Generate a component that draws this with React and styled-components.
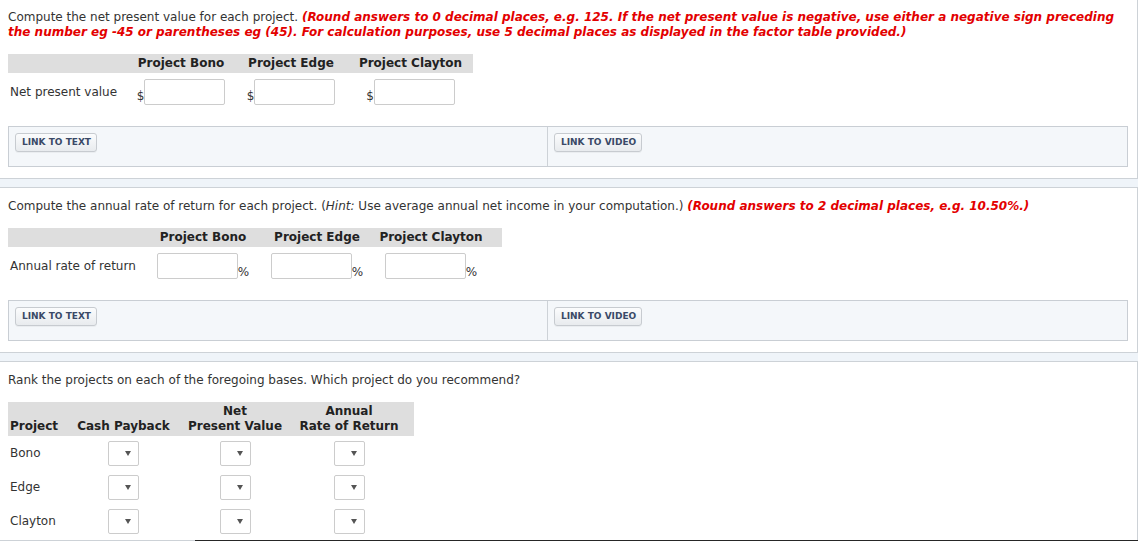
import React from "react";
import styled, { createGlobalStyle } from "styled-components";

const Global = createGlobalStyle`
  html, body { margin: 0; padding: 0; background: #eff4f9; }
  body {
    font-family: "DejaVu Sans", Verdana, sans-serif;
    font-size: 12px;
    color: #333;
  }
`;

const Page = styled.div`
  background: #eff4f9;
  min-height: 541px;
  display: flex;
  flex-direction: column;
  gap: 8px;
  overflow: hidden;
`;

const Section = styled.section`
  background: #fff;
  border: 1px solid #cdd2d7;
  border-left: 0;
  padding: 10px 9px ${(p) => p.$padBottom || "11px"} 8px;
  margin-top: ${(p) => (p.$first ? "-2px" : "0")};
  display: flex;
  flex-direction: column;
`;

const Prompt = styled.p`
  margin: 0 0 15px 0;
  line-height: 15px;
  padding-top: 1px;
  margin-bottom: 14px;
`;

const Warn = styled.span`
  color: #e30000;
  font-weight: bold;
  font-style: italic;
`;

const Em = styled.em`
  font-style: italic;
`;

const Table = styled.div`
  display: flex;
  flex-direction: column;
`;

const HeadRow = styled.div`
  display: grid;
  grid-template-columns: ${(p) => p.$cols};
  width: ${(p) => p.$width};
  background: #dedede;
  padding: 2px 0;
  min-height: 15px;
  align-items: end;
`;

const HeadCell = styled.div`
  font-weight: bold;
  color: #222;
  line-height: 15px;
  text-align: ${(p) => (p.$left ? "left" : "center")};
  padding-left: ${(p) => (p.$left ? "2px" : "0")};
  white-space: nowrap;
`;

const BodyRow = styled.div`
  display: grid;
  grid-template-columns: ${(p) => p.$cols};
  padding: ${(p) => p.$pad || "6px 0 0 0"};
  align-items: center;
`;

const Label = styled.div`
  padding-left: 2px;
  line-height: 15px;
  white-space: nowrap;
`;

const Cell = styled.div`
  display: flex;
  justify-content: center;
  align-items: flex-end;
`;

const Unit = styled.span`
  line-height: 13px;
  padding-bottom: ${(p) => p.$pb || "2px"};
  color: #333;
`;

const Field = styled.input`
  box-sizing: border-box;
  width: 81px;
  height: 26px;
  border: 1px solid #cccccc;
  border-radius: 2px;
  background: #fff;
  margin: 0;
  padding: 0 4px;
  font: inherit;
`;

const SelectBox = styled.div`
  box-sizing: border-box;
  width: 31px;
  height: 25px;
  border: 1px solid #cccccc;
  border-radius: 2px;
  background: #fff;
  display: flex;
  align-items: center;
  justify-content: flex-end;
  padding-right: 7px;
`;

const Caret = styled.span`
  width: 0;
  height: 0;
  border-left: 3px solid transparent;
  border-right: 3px solid transparent;
  border-top: 5px solid #555;
`;

const LinkBar = styled.div`
  margin-top: 21px;
  display: grid;
  grid-template-columns: 538px 1fr;
  border: 1px solid #c9ced4;
  background: #f4f7fa;
  height: 39px;
`;

const LinkCell = styled.div`
  padding: 6px 6px;
  border-left: ${(p) => (p.$divider ? "1px solid #cdd2d7" : "0")};
  display: flex;
  align-items: flex-start;
`;

const LinkButton = styled.button`
  font-family: "DejaVu Sans", Verdana, sans-serif;
  font-size: 9px;
  font-weight: bold;
  color: #3a4967;
  height: 19px;
  padding: 0 5px 0 6px;
  border: 1px solid #c7cbd0;
  border-radius: 3px;
  background: linear-gradient(#fbfcfd, #e8ebee);
  box-shadow: 0 1px 0 rgba(0, 0, 0, 0.04);
  cursor: pointer;
  line-height: 17px;
  white-space: nowrap;
`;

const BottomEdge = styled.div`
  position: fixed;
  left: 195px;
  right: 0;
  bottom: 0;
  height: 1px;
  background: #262626;
`;

const npvCols = "120px 106px 114px 125px";
const arrCols = "142px 106px 122px 106px";
const rankCols = "60px 111px 112px 116px";

const Links = () => (
  <LinkBar>
    <LinkCell>
      <LinkButton type="button">LINK TO TEXT</LinkButton>
    </LinkCell>
    <LinkCell $divider>
      <LinkButton type="button">LINK TO VIDEO</LinkButton>
    </LinkCell>
  </LinkBar>
);

const projects = ["Project Bono", "Project Edge", "Project Clayton"];

export default function App() {
  return (
    <>
      <Global />
      <Page>
        <Section $first>
          <Prompt>
            Compute the net present value for each project.{" "}
            <Warn>
              (Round answers to 0 decimal places, e.g. 125. If the net present value is negative, use
              either a negative sign preceding the number eg -45 or parentheses eg (45). For
              calculation purposes, use 5 decimal places as displayed in the factor table provided.)
            </Warn>
          </Prompt>
          <Table>
            <HeadRow $cols={npvCols} $width="465px">
              <HeadCell />
              {projects.map((p) => (
                <HeadCell key={p}>{p}</HeadCell>
              ))}
            </HeadRow>
            <BodyRow $cols={npvCols}>
              <Label>Net present value</Label>
              {projects.map((p) => (
                <Cell key={p}>
                  <Unit>$</Unit>
                  <Field aria-label={`${p} net present value`} />
                </Cell>
              ))}
            </BodyRow>
          </Table>
          <Links />
        </Section>

        <Section>
          <Prompt>
            Compute the annual rate of return for each project. (<Em>Hint:</Em> Use average annual
            net income in your computation.){" "}
            <Warn>(Round answers to 2 decimal places, e.g. 10.50%.)</Warn>
          </Prompt>
          <Table>
            <HeadRow $cols={arrCols} $width="494px">
              <HeadCell />
              {projects.map((p) => (
                <HeadCell key={p}>{p}</HeadCell>
              ))}
            </HeadRow>
            <BodyRow $cols={arrCols}>
              <Label>Annual rate of return</Label>
              {projects.map((p) => (
                <Cell key={p}>
                  <Field aria-label={`${p} annual rate of return`} />
                  <Unit $pb="0px">%</Unit>
                </Cell>
              ))}
            </BodyRow>
          </Table>
          <Links />
        </Section>

        <Section $padBottom="2px">
          <Prompt>
            Rank the projects on each of the foregoing bases. Which project do you recommend?
          </Prompt>
          <Table>
            <HeadRow $cols={rankCols} $width="406px">
              <HeadCell $left>Project</HeadCell>
              <HeadCell>Cash Payback</HeadCell>
              <HeadCell>
                Net
                <br />
                Present Value
              </HeadCell>
              <HeadCell>
                Annual
                <br />
                Rate of Return
              </HeadCell>
            </HeadRow>
            {["Bono", "Edge", "Clayton"].map((name) => (
              <BodyRow key={name} $cols={rankCols} $pad="5px 0 4px 0">
                <Label>{name}</Label>
                {[0, 1, 2].map((i) => (
                  <Cell key={i}>
                    <SelectBox role="combobox" aria-label={`${name} rank ${i + 1}`}>
                      <Caret />
                    </SelectBox>
                  </Cell>
                ))}
              </BodyRow>
            ))}
          </Table>
        </Section>
      </Page>
      <BottomEdge />
    </>
  );
}
